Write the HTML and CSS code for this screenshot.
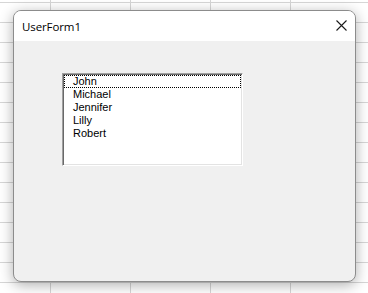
FILE: index.html
```html
<!DOCTYPE html>
<html>
<head>
<meta charset="utf-8">
<link rel="stylesheet" href="styles.css">
</head>
<body>
<div class="window">
  <div class="titlebar">
    <span class="title">UserForm1</span>
    <svg class="close" width="11" height="11" viewBox="0 0 11 11"><path d="M0.5 0.5 L10.5 10.5 M10.5 0.5 L0.5 10.5" stroke="#1a1a1a" stroke-width="1.1" fill="none"/></svg>
  </div>
  <div class="content">
    <div class="listbox">
      <div class="item focus">John</div>
      <div class="item">Michael</div>
      <div class="item">Jennifer</div>
      <div class="item">Lilly</div>
      <div class="item">Robert</div>
    </div>
  </div>
</div>
</body>
</html>
```
FILE: styles.css
```css
html, body {
  margin: 0;
  height: 100%;
}
body {
  padding: 10px 0 0 13px;
  box-sizing: border-box;
  background-color: #ffffff;
  background-image:
    linear-gradient(to right, #d6d6d6 1px, transparent 1px),
    linear-gradient(to bottom, #d6d6d6 1px, transparent 1px);
  background-size: 80px 100%, 100% 20px;
  background-position: 50px 0, 0 2px;
  overflow: hidden;
}
.window {
  width: 343px;
  height: 272px;
  box-sizing: border-box;
  border: 1px solid #8c8c8c;
  border-radius: 8px;
  overflow: hidden;
  background: #f0f0f0;
  box-shadow: 0 3px 14px rgba(0, 0, 0, 0.32);
  display: flex;
  flex-direction: column;
}
.titlebar {
  height: 30px;
  flex: none;
  background: #ffffff;
  display: flex;
  align-items: center;
  justify-content: space-between;
  padding: 0 8px 0 8px;
}
.title {
  font-family: "Open Sans", "Noto Sans", sans-serif;
  font-size: 11.5px;
  color: #000;
  letter-spacing: -0.1px;
}
.close {
  display: block;
  margin-top: -1px;
}
.content {
  flex: 1;
  padding: 32px 0 0 48px;
}
.listbox {
  width: 181px;
  height: 93px;
  box-sizing: border-box;
  background: #ffffff;
  border-style: solid;
  border-width: 1px;
  border-color: #a0a0a0 #ffffff #ffffff #a0a0a0;
  box-shadow: inset 1px 1px 0 #696969, inset -1px -1px 0 #e3e3e3;
  padding: 1px 1px 1px 1px;
  font-family: "Liberation Sans", Arial, sans-serif;
  font-size: 11px;
  color: #000;
}
.item {
  height: 13px;
  line-height: 13px;
  padding-left: 9px;
}
.item.focus {
  outline: 1px dotted #000;
  outline-offset: -1px;
}
```
